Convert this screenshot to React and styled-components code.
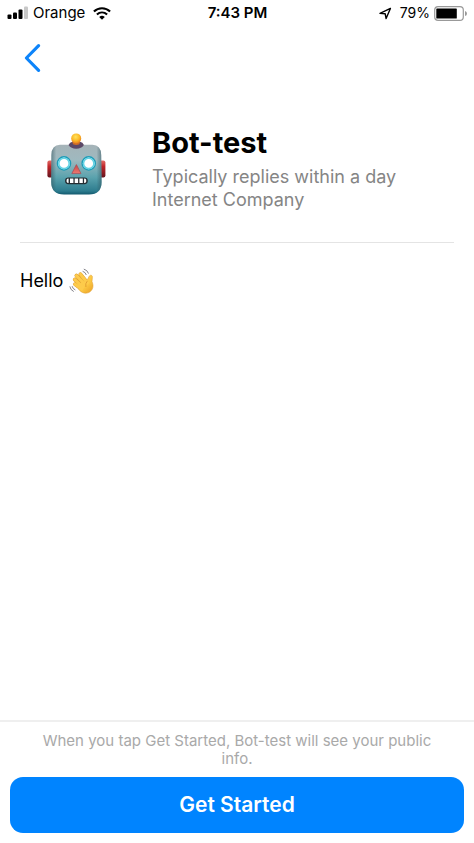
import React from 'react';
import styled, { createGlobalStyle } from 'styled-components';

const GlobalStyle = createGlobalStyle`
  * {
    box-sizing: border-box;
  }
  body {
    margin: 0;
    background: #fff;
    font-family: Inter, "Liberation Sans", sans-serif;
    color: #000;
  }
`;

const Signal = () => (
  <svg width="22" height="14" viewBox="0 0 22 14" aria-hidden="true">
    <rect x="0.5" y="8.5" width="4" height="4.5" rx="1.1" />
    <rect x="6" y="6.5" width="4" height="6.5" rx="1.1" />
    <rect x="11.5" y="3.5" width="4" height="9.5" rx="1.1" />
    <rect x="17" y="0.5" width="4" height="12.5" rx="1.1" fill="#c8c8c8" />
  </svg>
);

const Wifi = () => (
  <svg width="18" height="13" viewBox="0 0 18 13" fill="none" stroke="#000" strokeWidth="2.1" aria-hidden="true">
    <path d="M0.9 4.6 C5.5 0.1 12.5 0.1 17.1 4.6" />
    <path d="M3.9 7.6 C6.9 4.8 11.1 4.8 14.1 7.6" />
    <path d="M6.2 9.9 Q9 7.4 11.8 9.9 L9 12.7 Z" fill="#000" stroke="none" />
  </svg>
);

const Location = () => (
  <svg width="13" height="13" viewBox="0 0 13 13" fill="none" stroke="#000" strokeWidth="1.4" strokeLinejoin="round" aria-hidden="true">
    <path d="M11.4 1.4 L1 6.4 L6.2 6.8 L7.1 11.6 Z" />
  </svg>
);

const Battery = () => (
  <svg width="34" height="15" viewBox="0 0 34 15" aria-hidden="true">
    <rect x="0.7" y="0.7" width="28.6" height="13.6" rx="3.4" fill="none" stroke="#999" strokeWidth="1.2" />
    <rect x="2.3" y="2.4" width="20.5" height="10.2" rx="0.6" />
    <path d="M31 5 Q33 5.5 33 7.5 Q33 9.5 31 10 Z" fill="#999" />
  </svg>
);

const Chevron = () => (
  <svg width="18" height="30" viewBox="0 0 18 30" fill="none" stroke="#0d84fa" strokeWidth="3.2" strokeLinecap="round" strokeLinejoin="round" aria-hidden="true">
    <path d="M14.6 2.6 L2.4 15 L14.6 27.4" />
  </svg>
);

const HEAD = 'M14 11.8 H22.5 Q25 15 30.2 15 Q35.5 15 38 11.8 H46.5 Q55 12 55.2 22 L55.6 49 Q55.6 61.3 43 61.5 H18 Q5.2 61.3 5.2 49 L5.4 22 Q5.6 12 14 11.8 Z';

const Robot = () => (
  <svg width="60" height="64" viewBox="0 0 60 64" role="img" aria-label="Bot-test">
    <defs>
      <linearGradient id="face" x1="0" y1="0" x2="0" y2="1">
        <stop offset="0" stopColor="#a5b3b8" />
        <stop offset="0.3" stopColor="#9fb9bf" />
        <stop offset="0.65" stopColor="#5ba3ae" />
        <stop offset="0.93" stopColor="#2d7c8e" />
        <stop offset="1" stopColor="#12596e" />
      </linearGradient>
      <linearGradient id="side" x1="0" y1="0" x2="1" y2="0">
        <stop offset="0" stopColor="#31555f" stopOpacity="0.55" />
        <stop offset="0.1" stopColor="#31555f" stopOpacity="0" />
        <stop offset="0.9" stopColor="#31555f" stopOpacity="0" />
        <stop offset="1" stopColor="#31555f" stopOpacity="0.55" />
      </linearGradient>
      <linearGradient id="ear" x1="0" y1="0" x2="0" y2="1">
        <stop offset="0" stopColor="#e26a66" />
        <stop offset="0.35" stopColor="#c0262a" />
        <stop offset="1" stopColor="#64141e" />
      </linearGradient>
      <radialGradient id="bulb" cx="0.45" cy="0.35" r="0.65">
        <stop offset="0" stopColor="#ffe35c" />
        <stop offset="0.6" stopColor="#fbb827" />
        <stop offset="1" stopColor="#e9811d" />
      </radialGradient>
      <linearGradient id="nose" x1="0" y1="0" x2="0" y2="1">
        <stop offset="0" stopColor="#c84444" />
        <stop offset="1" stopColor="#ed7970" />
      </linearGradient>
    </defs>
    <rect x="1.4" y="27.5" width="6" height="17" rx="2" fill="url(#ear)" />
    <rect x="53.4" y="27.5" width="6" height="17" rx="2" fill="url(#ear)" />
    <path d={HEAD} fill="url(#face)" />
    <path d={HEAD} fill="url(#side)" />
    <path d="M22.5 12 Q23.5 9.2 27 8.6 H33.5 Q37 9.2 38 12 Q35.5 15.8 30.2 15.8 Q25 15.8 22.5 12 Z" fill="#5b4866" />
    <path d="M26.2 8.4 H34.2 L33.4 11.2 Q30.2 12.6 27 11.2 Z" fill="#cf6c26" />
    <circle cx="30.2" cy="5.4" r="5" fill="url(#bulb)" />
    <circle cx="18" cy="30.4" r="6.6" fill="#fff" stroke="#1b9cb8" strokeWidth="1.4" />
    <circle cx="18" cy="30.4" r="5.2" fill="none" stroke="#63d3e4" strokeWidth="1.6" />
    <circle cx="42.7" cy="30.4" r="6.6" fill="#fff" stroke="#1b9cb8" strokeWidth="1.4" />
    <circle cx="42.7" cy="30.4" r="5.2" fill="none" stroke="#63d3e4" strokeWidth="1.6" />
    <path d="M30.4 31.6 L35 40.6 H25.8 Z" fill="url(#nose)" stroke="#a6505a" strokeWidth="0.8" strokeLinejoin="round" />
    <rect x="19" y="44.4" width="22.8" height="6.8" rx="3.4" fill="#252d32" />
    <path d="M20.6 46.8 Q21 45.6 22.6 45.5 V50.1 Q21 50 20.6 48.8 Z M24 45.5 H27.4 V50.1 H24 Z M28.7 45.5 H32.1 V50.1 H28.7 Z M33.4 45.5 H36.8 V50.1 H33.4 Z M38.1 45.5 Q39.8 45.6 40.2 46.8 V48.8 Q39.8 50 38.1 50.1 Z" fill="#fff" />
  </svg>
);

const FINGERS = 'M6 16.2 L12.5 21 M5.8 11.6 L14 19 M7.4 7.6 L16 16.5 M11.4 6.2 L18.5 15';
const PALM = 'M12 14 L17.6 13.2 L20.2 8.2 C21.2 6.4 23.8 7.2 23.4 9.4 L23 13.6 C25 18 23.8 21.8 21 23.8 C17 26.6 12.4 25 9.6 21.2 Z';

const Wave = () => (
  <svg width="26" height="26" viewBox="0 0 26 26" role="img" aria-label="waving hand">
    <defs>
      <linearGradient id="skin" x1="0" y1="0" x2="0.8" y2="1">
        <stop offset="0" stopColor="#ffd255" />
        <stop offset="0.6" stopColor="#fcc843" />
        <stop offset="1" stopColor="#eda629" />
      </linearGradient>
    </defs>
    <path d={FINGERS} fill="none" stroke="#dd9a30" strokeWidth="3.8" strokeLinecap="round" />
    <path d={PALM} fill="url(#skin)" stroke="#dd9a30" strokeWidth="0.5" />
    <path d={FINGERS} fill="none" stroke="#fdcb4b" strokeWidth="3" strokeLinecap="round" />
    <path d="M18 13.4 Q16 15.6 16.8 18.6" fill="none" stroke="#dc942c" strokeWidth="0.8" strokeLinecap="round" />
    <path d="M14 3.4 Q16.4 4 17.2 6.6 M15.2 1.2 Q18.4 2 19.4 5.2 M3.2 18.6 Q3.6 20.8 6 21.8 M0.9 18.8 Q1.4 22 4.4 23.4" fill="none" stroke="#777780" strokeWidth="0.9" strokeLinecap="round" />
  </svg>
);

export default function App() {
  return (
    <Page>
      <GlobalStyle />
      <StatusBar>
        <Carrier>
          <Signal />
          <span>Orange</span>
          <Wifi />
        </Carrier>
        <Clock>7:43 PM</Clock>
        <Power>
          <Location />
          <span>79%</span>
          <Battery />
        </Power>
      </StatusBar>
      <NavBar>
        <BackButton type="button" aria-label="Back">
          <Chevron />
        </BackButton>
      </NavBar>
      <Main>
        <Profile>
          <Avatar>
            <Robot />
          </Avatar>
          <div>
            <Name>Bot-test</Name>
            <Detail>Typically replies within a day</Detail>
            <Detail>Internet Company</Detail>
          </div>
        </Profile>
        <Greeting>
          Hello <Wave />
        </Greeting>
      </Main>
      <Footer>
        <Notice>When you tap Get Started, Bot-test will see your public info.</Notice>
        <StartButton type="button">Get Started</StartButton>
      </Footer>
    </Page>
  );
}

const Page = styled.div`
  min-height: 100vh;
  display: flex;
  flex-direction: column;
`;

const StatusBar = styled.header`
  display: grid;
  grid-template-columns: 1fr auto 1fr;
  align-items: center;
  height: 26px;
  padding: 0 6px 0 7px;
  font-size: 15px;
  line-height: 18px;
`;

const Carrier = styled.div`
  display: flex;
  align-items: center;
  gap: 4px;
  svg:last-child {
    margin-left: 4px;
  }
`;

const Clock = styled.time`
  font-weight: 600;
`;

const Power = styled.div`
  display: flex;
  align-items: center;
  justify-content: flex-end;
  gap: 4px;
  font-size: 14px;
  svg:first-child {
    margin-right: 4px;
  }
`;

const NavBar = styled.nav`
  display: flex;
  align-items: center;
  height: 64px;
  padding: 0 16px;
`;

const BackButton = styled.button`
  display: flex;
  padding: 8px;
  border: 0;
  background: none;
  cursor: pointer;
`;

const Main = styled.main`
  flex: 1;
  padding: 0 20px;
`;

const Profile = styled.section`
  display: flex;
  gap: 20px;
  padding: 33px 0 31px;
  border-bottom: 1px solid #e4e4e4;
`;

const Avatar = styled.div`
  display: flex;
  justify-content: center;
  flex: none;
  width: 112px;
  padding-top: 10px;
`;

const Name = styled.h1`
  margin: 0 0 3px;
  font-size: 29px;
  font-weight: 700;
  line-height: 39px;
`;

const Detail = styled.p`
  margin: 0;
  font-size: 18px;
  line-height: 23px;
  color: #858585;
`;

const Greeting = styled.p`
  display: flex;
  align-items: center;
  gap: 6px;
  margin: 24px 0;
  font-size: 18px;
  line-height: 28px;
`;

const Footer = styled.footer`
  padding: 10px;
  border-top: 2px solid #efefef;
`;

const Notice = styled.p`
  margin: 0 0 9px;
  padding: 0 20px;
  font-size: 15px;
  line-height: 18px;
  text-align: center;
  color: #a9a9a9;
`;

const StartButton = styled.button`
  width: 100%;
  padding: 14px;
  border: 0;
  border-radius: 13px;
  background: #0084ff;
  color: #fff;
  font-family: inherit;
  font-size: 21px;
  font-weight: 600;
  line-height: 28px;
  cursor: pointer;
`;
